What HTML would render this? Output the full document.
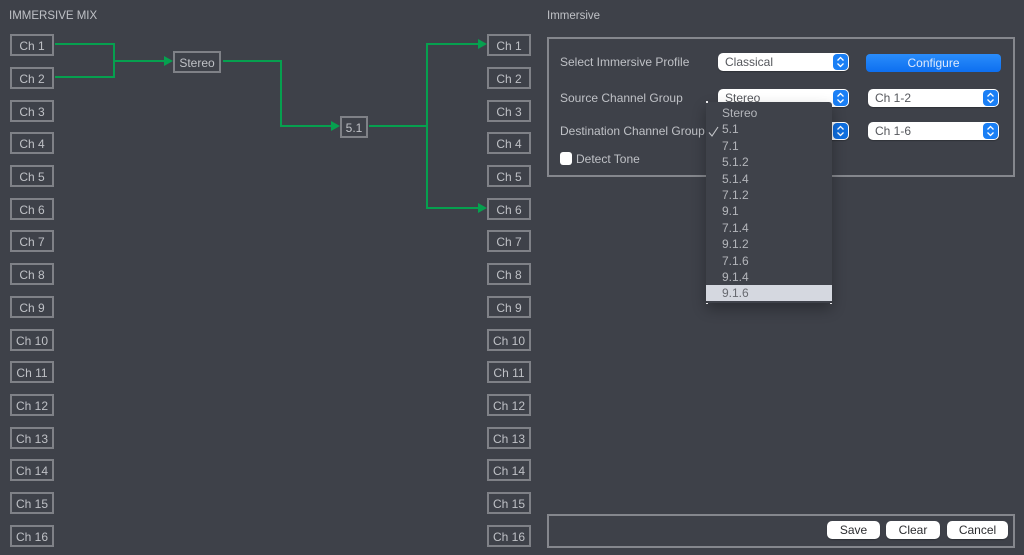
<!DOCTYPE html>
<html><head><meta charset="utf-8">
<style>
html,body{margin:0;padding:0;background:#3e4149;width:1024px;height:555px;overflow:hidden;}
body{position:relative;font-family:"Liberation Sans",sans-serif;font-size:12px;color:#bfc1c6;}
.a{position:absolute;white-space:nowrap;}
.ch{position:absolute;box-sizing:border-box;width:44px;height:22px;border:2px solid #7f8187;text-align:center;line-height:20px;font-size:12px;color:#bfc1c6;}
.panel{position:absolute;box-sizing:border-box;border:2px solid #85878d;}
.sel{position:absolute;box-sizing:border-box;height:18px;width:131px;background:#fff;border-radius:5px;color:#55575c;font-size:12px;line-height:18px;padding-left:7px;box-shadow:0 1px 1px rgba(0,0,0,.25);}
.st{position:absolute;right:1px;top:1px;width:15px;height:16px;background:#1a7ff5;border-radius:4px;}
.st svg{position:absolute;left:0;top:0;}
.btn{position:absolute;box-sizing:border-box;height:18px;background:#fff;border-radius:5px;color:#2c2d30;font-size:12px;line-height:18px;text-align:center;box-shadow:0 1px 1px rgba(0,0,0,.25);}
.menu{position:absolute;left:706px;top:102px;width:126px;height:201px;background:#3f424a;border-radius:3px;box-shadow:0 6px 14px rgba(0,0,0,.3);}
.mi{position:absolute;left:16px;color:#b4b6bb;font-size:12px;line-height:16px;}
</style></head>
<body>
<div class="a" style="left:9px;top:9px;font-size:11.5px;line-height:14px;">IMMERSIVE MIX</div>
<div class="a" style="left:547px;top:9px;font-size:11.5px;line-height:14px;">Immersive</div>

<div class="ch" style="left:10px;top:34px">Ch 1</div>
<div class="ch" style="left:10px;top:67px">Ch 2</div>
<div class="ch" style="left:10px;top:100px">Ch 3</div>
<div class="ch" style="left:10px;top:132px">Ch 4</div>
<div class="ch" style="left:10px;top:165px">Ch 5</div>
<div class="ch" style="left:10px;top:198px">Ch 6</div>
<div class="ch" style="left:10px;top:230px">Ch 7</div>
<div class="ch" style="left:10px;top:263px">Ch 8</div>
<div class="ch" style="left:10px;top:296px">Ch 9</div>
<div class="ch" style="left:10px;top:329px">Ch 10</div>
<div class="ch" style="left:10px;top:361px">Ch 11</div>
<div class="ch" style="left:10px;top:394px">Ch 12</div>
<div class="ch" style="left:10px;top:427px">Ch 13</div>
<div class="ch" style="left:10px;top:459px">Ch 14</div>
<div class="ch" style="left:10px;top:492px">Ch 15</div>
<div class="ch" style="left:10px;top:525px">Ch 16</div>

<div class="ch" style="left:487px;top:34px">Ch 1</div>
<div class="ch" style="left:487px;top:67px">Ch 2</div>
<div class="ch" style="left:487px;top:100px">Ch 3</div>
<div class="ch" style="left:487px;top:132px">Ch 4</div>
<div class="ch" style="left:487px;top:165px">Ch 5</div>
<div class="ch" style="left:487px;top:198px">Ch 6</div>
<div class="ch" style="left:487px;top:230px">Ch 7</div>
<div class="ch" style="left:487px;top:263px">Ch 8</div>
<div class="ch" style="left:487px;top:296px">Ch 9</div>
<div class="ch" style="left:487px;top:329px">Ch 10</div>
<div class="ch" style="left:487px;top:361px">Ch 11</div>
<div class="ch" style="left:487px;top:394px">Ch 12</div>
<div class="ch" style="left:487px;top:427px">Ch 13</div>
<div class="ch" style="left:487px;top:459px">Ch 14</div>
<div class="ch" style="left:487px;top:492px">Ch 15</div>
<div class="ch" style="left:487px;top:525px">Ch 16</div>

<div class="ch" style="left:173px;top:51px;width:48px">Stereo</div>
<div class="ch" style="left:340px;top:116px;width:28px">5.1</div>

<svg class="a" style="left:0;top:0" width="540" height="555" fill="none">
<g stroke="#06a04f" stroke-width="2">
<path d="M55 44H114V77H55"/>
<path d="M114 61H165"/>
<path d="M223 61H281V126H332"/>
<path d="M369 126H427"/>
<path d="M479 44H427V208H479"/>
</g>
<g fill="#06a04f">
<path d="M164 56L173 61L164 66Z"/>
<path d="M331 121L340 126L331 131Z"/>
<path d="M478 39L487 44L478 49Z"/>
<path d="M478 203L487 208L478 213Z"/>
</g>
</svg>

<div class="panel" style="left:547px;top:37px;width:468px;height:140px"></div>
<div class="panel" style="left:547px;top:514px;width:468px;height:34px"></div>

<div class="a" style="left:560px;top:55px;line-height:14px;">Select Immersive Profile</div>
<div class="a" style="left:560px;top:91px;line-height:14px;">Source Channel Group</div>
<div class="a" style="left:560px;top:124px;line-height:14px;">Destination Channel Group</div>
<div class="a" style="left:560px;top:152px;width:12px;height:13px;background:#fff;border-radius:3px;"></div>
<div class="a" style="left:576px;top:152px;line-height:14px;">Detect Tone</div>

<div class="sel" style="left:718px;top:53px">Classical<span class="st"><svg width="15" height="16" fill="none" stroke="#fff" stroke-width="1.3"><path d="M4.5 6.5L7.5 3.5L10.5 6.5M4.5 9.5L7.5 12.5L10.5 9.5"/></svg></span></div>
<div class="sel" style="left:718px;top:89px">Stereo<span class="st"><svg width="15" height="16" fill="none" stroke="#fff" stroke-width="1.3"><path d="M4.5 6.5L7.5 3.5L10.5 6.5M4.5 9.5L7.5 12.5L10.5 9.5"/></svg></span></div>
<div class="sel" style="left:718px;top:122px"><span class="st" style="background:#0f6fe0"><svg width="15" height="16" fill="none" stroke="#fff" stroke-width="1.3"><path d="M4.5 6.5L7.5 3.5L10.5 6.5M4.5 9.5L7.5 12.5L10.5 9.5"/></svg></span></div>
<div class="sel" style="left:868px;top:89px;width:131px">Ch 1-2<span class="st"><svg width="15" height="16" fill="none" stroke="#fff" stroke-width="1.3"><path d="M4.5 6.5L7.5 3.5L10.5 6.5M4.5 9.5L7.5 12.5L10.5 9.5"/></svg></span></div>
<div class="sel" style="left:868px;top:122px;width:131px">Ch 1-6<span class="st"><svg width="15" height="16" fill="none" stroke="#fff" stroke-width="1.3"><path d="M4.5 6.5L7.5 3.5L10.5 6.5M4.5 9.5L7.5 12.5L10.5 9.5"/></svg></span></div>

<div class="a" style="left:866px;top:54px;width:135px;height:18px;border-radius:4px;background:linear-gradient(#2a8dfb,#0d6ff0);color:#dfeafc;text-align:center;line-height:18px;">Configure</div>

<div class="menu">
<div class="mi" style="top:3px">Stereo</div>
<div class="mi" style="top:19.4px">5.1</div>
<div class="mi" style="top:35.8px">7.1</div>
<div class="mi" style="top:52.2px">5.1.2</div>
<div class="mi" style="top:68.6px">5.1.4</div>
<div class="mi" style="top:85px">7.1.2</div>
<div class="mi" style="top:101.4px">9.1</div>
<div class="mi" style="top:117.8px">7.1.4</div>
<div class="mi" style="top:134.2px">9.1.2</div>
<div class="mi" style="top:150.6px">7.1.6</div>
<div class="mi" style="top:167px">9.1.4</div>
<div class="a" style="left:0;top:183px;width:126px;height:16px;background:#d5d8e0;"></div>
<div class="mi" style="top:183px;color:#686a70">9.1.6</div>
<svg class="a" style="left:2px;top:24px" width="12" height="12" fill="none" stroke="#c4c6ca" stroke-width="1.1"><path d="M1 6.5L4 10L10 1"/></svg>
</div>

<div class="a" style="left:706px;top:101px;width:2px;height:2px;background:#e8e8ea"></div>
<div class="a" style="left:706px;top:303px;width:2px;height:1px;background:#e8e8ea"></div>
<div class="a" style="left:830px;top:303px;width:2px;height:1px;background:#e8e8ea"></div>

<div class="btn" style="left:827px;top:521px;width:53px">Save</div>
<div class="btn" style="left:886px;top:521px;width:54px">Clear</div>
<div class="btn" style="left:947px;top:521px;width:61px">Cancel</div>
</body></html>
